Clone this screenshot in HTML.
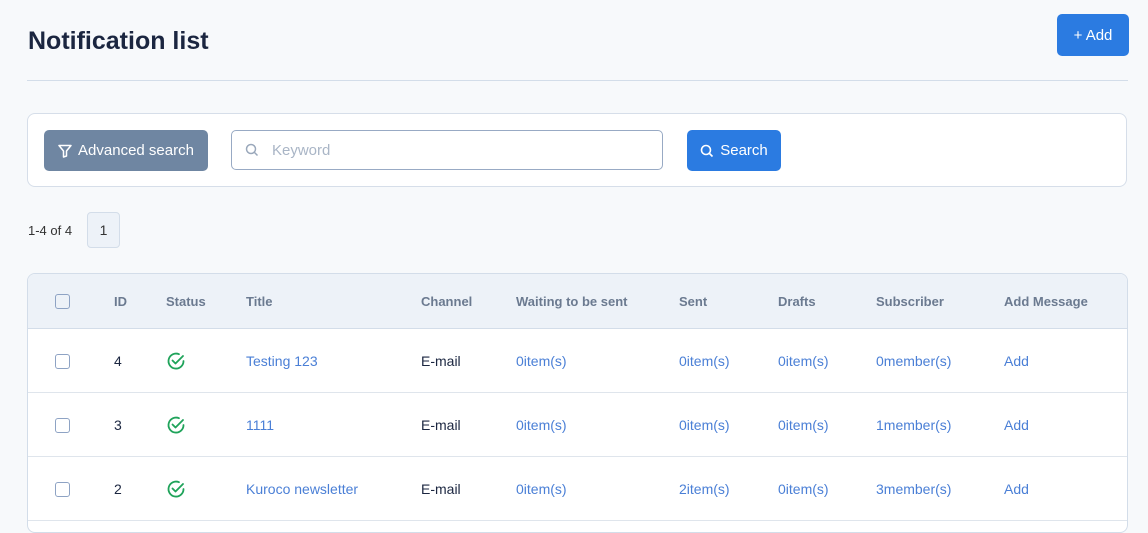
<!DOCTYPE html><html><head><style>
body{margin:0;background:#f7f9fb;font-family:"Liberation Sans",sans-serif;width:1148px;height:523px;overflow:hidden;position:relative}
.a{position:absolute}
h1{position:absolute;left:28px;top:27px;margin:0;font-size:25px;font-weight:bold;color:#1b2640}
.btn{position:absolute;border-radius:5px;color:#fff;font-size:15px;display:flex;align-items:center;justify-content:center;gap:6px}
table{border-collapse:collapse;width:100%;font-size:14px}
th,td{padding:0}
th{height:54px;background:#edf2f8;color:#6b7a90;font-size:13px;text-align:left;font-weight:bold;border-bottom:1px solid #d3dde9}
td{height:63px;border-bottom:1px solid #dfe5ec;color:#1b2640}
.l{color:#4a7fd6}
.cb{width:15px;height:15px;border:1.5px solid #8ea3c4;border-radius:3px;display:inline-block;box-sizing:border-box;vertical-align:middle}
</style></head><body>
<h1>Notification list</h1>
<div class="btn" style="left:1057px;top:14px;width:72px;height:42px;background:#2b7be1">+ Add</div>
<div class="a" style="left:27px;top:80px;width:1101px;height:1px;background:#d3dde9"></div>
<div class="a" style="left:27px;top:113px;width:1100px;height:74px;background:#fff;border:1px solid #d6dee9;border-radius:8px;box-sizing:border-box"></div>
<div class="btn" style="left:44px;top:130px;width:164px;height:41px;background:#6f86a2"><svg width="14" height="14" viewBox="0 0 14 14"><path d="M1 1.5h12L8.5 7v5L5.5 13V7z" fill="none" stroke="#fff" stroke-width="1.5" stroke-linejoin="round"/></svg>Advanced search</div>
<div class="a" style="left:231px;top:130px;width:432px;height:40px;border:1px solid #98aac4;border-radius:5px;background:#fff;box-sizing:border-box"></div>
<svg class="a" style="left:245px;top:143px" width="14" height="14" viewBox="0 0 14 14"><circle cx="6" cy="6" r="4.5" fill="none" stroke="#9aa8bb" stroke-width="1.5"/><path d="M9.5 9.5l3 3" stroke="#9aa8bb" stroke-width="1.5"/></svg>
<div class="a" style="left:272px;top:142px;font-size:15px;color:#a9b5c6">Keyword</div>
<div class="btn" style="left:687px;top:130px;width:94px;height:41px;background:#2b7be1"><svg width="14" height="14" viewBox="0 0 14 14"><circle cx="6" cy="6" r="4.5" fill="none" stroke="#fff" stroke-width="1.6"/><path d="M9.5 9.5l3 3" stroke="#fff" stroke-width="1.6"/></svg>Search</div>
<div class="a" style="left:28px;top:223px;font-size:13px;color:#333">1-4 of 4</div>
<div class="a" style="left:87px;top:212px;width:33px;height:36px;background:#edf2f8;border:1px solid #d3dde9;border-radius:4px;box-sizing:border-box;text-align:center;line-height:34px;font-size:14px;color:#333">1</div>
<div class="a" style="left:27px;top:273px;width:1101px;height:260px;background:#fff;border:1px solid #d3dde9;border-radius:8px;overflow:hidden;box-sizing:border-box">
<table><colgroup><col style="width:86px"><col style="width:52px"><col style="width:80px"><col style="width:175px"><col style="width:95px"><col style="width:163px"><col style="width:99px"><col style="width:98px"><col style="width:128px"><col></colgroup>
<tr><th style="padding-left:27px"><span class="cb"></span></th><th>ID</th><th>Status</th><th>Title</th><th>Channel</th><th>Waiting to be sent</th><th>Sent</th><th>Drafts</th><th>Subscriber</th><th>Add Message</th></tr>
<tr><td style="padding-left:27px"><span class="cb"></span></td><td>4</td><td><svg width="20" height="20" viewBox="0 0 20 20" style="vertical-align:middle"><path d="M17.5 10A7.5 7.5 0 1 1 13 3.2" fill="none" stroke="#1fa35a" stroke-width="1.8" stroke-linecap="round"/><path d="M6.5 9.5l3 3L17 5" fill="none" stroke="#1fa35a" stroke-width="1.8" stroke-linecap="round" stroke-linejoin="round"/></svg></td><td class="l">Testing 123</td><td>E-mail</td><td class="l">0item(s)</td><td class="l">0item(s)</td><td class="l">0item(s)</td><td class="l">0member(s)</td><td class="l">Add</td></tr>
<tr><td style="padding-left:27px"><span class="cb"></span></td><td>3</td><td><svg width="20" height="20" viewBox="0 0 20 20" style="vertical-align:middle"><path d="M17.5 10A7.5 7.5 0 1 1 13 3.2" fill="none" stroke="#1fa35a" stroke-width="1.8" stroke-linecap="round"/><path d="M6.5 9.5l3 3L17 5" fill="none" stroke="#1fa35a" stroke-width="1.8" stroke-linecap="round" stroke-linejoin="round"/></svg></td><td class="l">1111</td><td>E-mail</td><td class="l">0item(s)</td><td class="l">0item(s)</td><td class="l">0item(s)</td><td class="l">1member(s)</td><td class="l">Add</td></tr>
<tr><td style="padding-left:27px"><span class="cb"></span></td><td>2</td><td><svg width="20" height="20" viewBox="0 0 20 20" style="vertical-align:middle"><path d="M17.5 10A7.5 7.5 0 1 1 13 3.2" fill="none" stroke="#1fa35a" stroke-width="1.8" stroke-linecap="round"/><path d="M6.5 9.5l3 3L17 5" fill="none" stroke="#1fa35a" stroke-width="1.8" stroke-linecap="round" stroke-linejoin="round"/></svg></td><td class="l">Kuroco newsletter</td><td>E-mail</td><td class="l">0item(s)</td><td class="l">2item(s)</td><td class="l">0item(s)</td><td class="l">3member(s)</td><td class="l">Add</td></tr>
</table></div>
</body></html>
